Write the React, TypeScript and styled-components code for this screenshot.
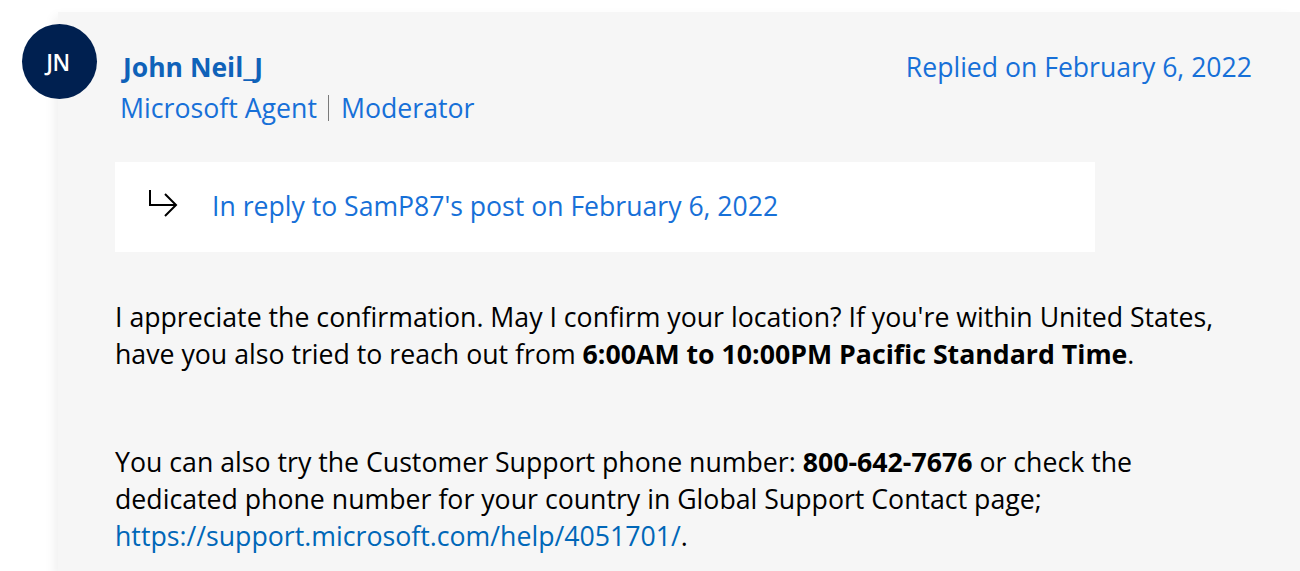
import React from "react";
import styled, { createGlobalStyle } from "styled-components";

const GlobalStyle = createGlobalStyle`
  html, body {
    margin: 0;
    padding: 0;
    background: #ffffff;
  }
  body {
    font-family: "Segoe UI", "Open Sans", "Liberation Sans", sans-serif;
    color: #000000;
    overflow: hidden;
  }
`;

const Page = styled.div`
  padding: 12px 0 0 58px;
  height: 571px;
  box-sizing: border-box;
`;

const Card = styled.article`
  background: #f6f6f6;
  min-height: 559px;
  padding: 12px 48px 0 57px;
  box-shadow: -8px 0 10px -4px rgba(0, 0, 0, 0.06);
`;

const Header = styled.header`
  display: flex;
  align-items: flex-start;
  margin-left: -93px;
`;

const Avatar = styled.div`
  width: 75px;
  height: 75px;
  border-radius: 50%;
  background: #002050;
  color: #ffffff;
  display: flex;
  align-items: center;
  justify-content: center;
  font-size: 22.5px;
  font-weight: 600;
  letter-spacing: -0.5px;
  padding: 2px 3px 0 0;
  box-sizing: border-box;
  flex-shrink: 0;
`;

const Meta = styled.div`
  flex: 1;
  display: flex;
  flex-direction: column;
  padding: 23px 0 0 23px;
`;

const TopLine = styled.div`
  display: flex;
  justify-content: space-between;
  align-items: center;
  height: 40px;
`;

const Name = styled.a`
  color: #0f62b9;
  font-weight: 700;
  font-size: 26.5px;
  text-decoration: none;
  padding-left: 3px;
`;

const Replied = styled.span`
  color: #1770d8;
  font-size: 26.6px;
`;

const Roles = styled.div`
  display: flex;
  align-items: center;
  height: 41px;
  font-size: 26.7px;
  color: #1770d8;
`;

const Divider = styled.span`
  display: inline-block;
  width: 1px;
  height: 26px;
  background: #7a7a7a;
  margin: 0 12px 0 11px;
`;

const ReplyBox = styled.div`
  width: 980px;
  height: 90px;
  box-sizing: border-box;
  margin-top: 34px;
  background: #ffffff;
  display: flex;
  align-items: center;
  padding-left: 32px;
  gap: 33px;

  svg {
    margin-bottom: 8px;
    flex-shrink: 0;
  }
`;

const ReplyLink = styled.a`
  color: #1770d8;
  font-size: 26.6px;
  text-decoration: none;
  margin-bottom: 2px;
`;

const Body = styled.div`
  padding-top: 46px;
  font-size: 26.7px;
  line-height: 37px;
  white-space: nowrap;
`;

const Para = styled.p<{ $gap?: number }>`
  margin: 0 0 ${(p) => p.$gap ?? 0}px 0;
`;

const Link = styled.a`
  color: #0067b8;
  text-decoration: none;
`;

const ReplyArrow = () => (
  <svg width="32" height="30" viewBox="0 0 32 30" fill="none">
    <path
      d="M3 2v15h26M18 6l11 11-11 11"
      stroke="#000"
      strokeWidth="2"
    />
  </svg>
);

export default function App() {
  return (
    <>
      <GlobalStyle />
      <Page>
        <Card>
          <Header>
            <Avatar>JN</Avatar>
            <Meta>
              <TopLine>
                <Name href="#">John Neil_J</Name>
                <Replied>Replied on February 6, 2022</Replied>
              </TopLine>
              <Roles>
                <span>Microsoft Agent</span>
                <Divider />
                <span>Moderator</span>
              </Roles>
            </Meta>
          </Header>
          <ReplyBox>
            <ReplyArrow />
            <ReplyLink href="#">In reply to SamP87's post on February 6, 2022</ReplyLink>
          </ReplyBox>
          <Body>
            <Para $gap={71}>
              I appreciate the confirmation. May I confirm your location? If you're within United States,
              <br />
              have you also tried to reach out from <b>6:00AM to 10:00PM Pacific Standard Time</b>.
            </Para>
            <Para>
              You can also try the Customer Support phone number: <b>800-642-7676</b> or check the
              <br />
              dedicated phone number for your country in Global Support Contact page;
              <br />
              <Link href="#">https://support.microsoft.com/help/4051701/</Link>.
            </Para>
          </Body>
        </Card>
      </Page>
    </>
  );
}
